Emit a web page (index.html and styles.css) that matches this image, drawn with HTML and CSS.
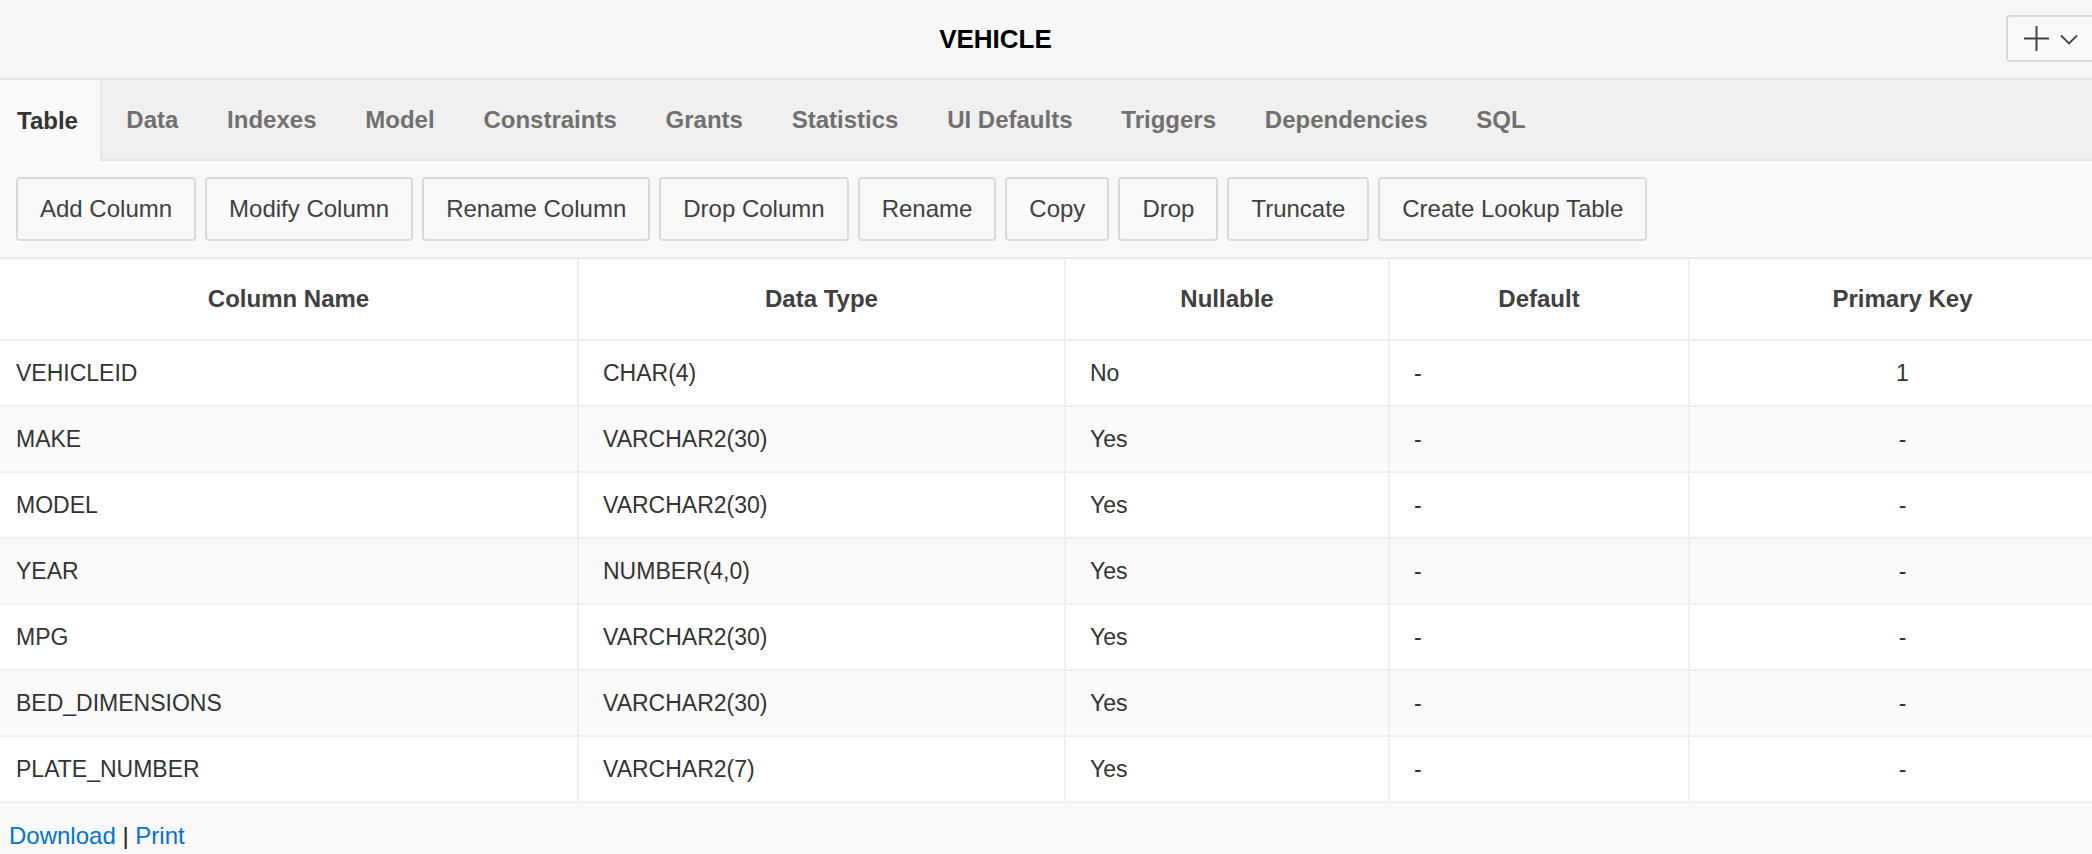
FILE: index.html
```html
<!DOCTYPE html>
<html lang="en">
<head>
<meta charset="utf-8">
<title>VEHICLE</title>
<link rel="stylesheet" href="styles.css">
</head>
<body>
<div class="page">
  <header class="titlebar">
    <h1 class="title">VEHICLE</h1>
    <button class="add-btn" type="button" aria-label="Add">
      <svg class="ico-plus" width="25" height="25" viewBox="0 0 25 25"><path d="M12.5 0V25M0 12.5H25" fill="none" stroke="#444" stroke-width="2"/></svg>
      <svg class="ico-chev" width="18" height="11" viewBox="0 0 18 11"><polyline points="1,1.5 9,9.5 17,1.5" fill="none" stroke="#444" stroke-width="1.8"/></svg>
    </button>
  </header>
  <nav class="tabs">
    <span class="tab active first">Table</span>
    <span class="tab">Data</span>
    <span class="tab">Indexes</span>
    <span class="tab">Model</span>
    <span class="tab">Constraints</span>
    <span class="tab">Grants</span>
    <span class="tab">Statistics</span>
    <span class="tab">UI Defaults</span>
    <span class="tab">Triggers</span>
    <span class="tab">Dependencies</span>
    <span class="tab">SQL</span>
  </nav>
  <div class="toolbar">
    <button class="btn" type="button">Add Column</button>
    <button class="btn" type="button">Modify Column</button>
    <button class="btn" type="button">Rename Column</button>
    <button class="btn" type="button">Drop Column</button>
    <button class="btn" type="button">Rename</button>
    <button class="btn" type="button">Copy</button>
    <button class="btn" type="button">Drop</button>
    <button class="btn" type="button">Truncate</button>
    <button class="btn" type="button">Create Lookup Table</button>
  </div>
  <table class="cols">
    <colgroup>
      <col class="c1"><col class="c2"><col class="c3"><col class="c4"><col class="c5">
    </colgroup>
    <thead>
      <tr><th>Column Name</th><th>Data Type</th><th>Nullable</th><th>Default</th><th>Primary Key</th></tr>
    </thead>
    <tbody>
      <tr><td class="name">VEHICLEID</td><td>CHAR(4)</td><td>No</td><td>-</td><td class="pk">1</td></tr>
      <tr><td class="name">MAKE</td><td>VARCHAR2(30)</td><td>Yes</td><td>-</td><td class="pk">-</td></tr>
      <tr><td class="name">MODEL</td><td>VARCHAR2(30)</td><td>Yes</td><td>-</td><td class="pk">-</td></tr>
      <tr><td class="name">YEAR</td><td>NUMBER(4,0)</td><td>Yes</td><td>-</td><td class="pk">-</td></tr>
      <tr><td class="name">MPG</td><td>VARCHAR2(30)</td><td>Yes</td><td>-</td><td class="pk">-</td></tr>
      <tr><td class="name">BED_DIMENSIONS</td><td>VARCHAR2(30)</td><td>Yes</td><td>-</td><td class="pk">-</td></tr>
      <tr><td class="name">PLATE_NUMBER</td><td>VARCHAR2(7)</td><td>Yes</td><td>-</td><td class="pk">-</td></tr>
    </tbody>
  </table>
  <div class="footer"><a class="link" href="#">Download</a> | <a class="link" href="#">Print</a></div>
</div>
</body>
</html>
```
FILE: styles.css
```css
html, body {
  margin: 0;
  padding: 0;
  overflow: hidden;
  background: #f9f9f9;
}
body {
  font-family: "Liberation Sans", Arial, Helvetica, sans-serif;
  color: #404040;
}
.page {
  width: 2116px;
}
.titlebar {
  display: flex;
  align-items: flex-start;
  height: 78px;
  background: #f7f7f7;
  border-bottom: 2px solid #e4e4e4;
}
.title {
  flex: 1;
  margin: 0;
  text-align: center;
  font-size: 26px;
  font-weight: bold;
  color: #000;
  line-height: 30px;
  padding-top: 24px;
}
.add-btn {
  margin: 15px 0 0 15px;
  width: 110px;
  height: 47px;
  box-sizing: border-box;
  border: 2px solid #dadada;
  border-radius: 4px;
  background: #f9f9f9;
  padding: 0 0 0 16px;
  display: flex;
  align-items: center;
}
.ico-plus {
  flex: none;
}
.ico-chev {
  flex: none;
  margin-left: 11px;
  margin-top: 1px;
}
.tabs {
  display: flex;
  height: 79px;
  background: #f0f0f0;
  border-bottom: 2px solid #e6e6e6;
}
.tab {
  display: flex;
  align-items: center;
  padding: 0 24.4px;
  font-size: 24px;
  font-weight: bold;
  color: #707070;
}
.tab.first {
  padding-left: 17px;
}
.tab.active {
  color: #333;
  background: #f9f9f9;
  height: 81px;
  margin-bottom: -2px;
  padding-right: 22px;
  border-right: 2px solid #e8e8e8;
}
.toolbar {
  display: flex;
  gap: 9px;
  padding: 16px 16px 16px;
  background: #f9f9f9;
  border-bottom: 2px solid #ececec;
}
.btn {
  height: 64px;
  box-sizing: border-box;
  padding: 0 22px;
  border: 2px solid #dadada;
  border-radius: 4px;
  background: #f9f9f9;
  font-family: "Liberation Sans", Arial, Helvetica, sans-serif;
  font-size: 24px;
  color: #404040;
}
.cols {
  width: 2116px;
  table-layout: fixed;
  border-collapse: collapse;
  background: #fff;
}
.c1 { width: 578px; }
.c2 { width: 487px; }
.c3 { width: 324px; }
.c4 { width: 300px; }
.c5 { width: 427px; }
.cols th {
  height: 80px;
  padding: 0;
  font-size: 24px;
  font-weight: bold;
  color: #404040;
  text-align: center;
  border: 2px solid #efefef;
  border-top: 0;
}
.cols td {
  height: 64px;
  padding: 0 0 0 24px;
  font-size: 23px;
  color: #333;
  border: 2px solid #efefef;
}
.cols th:first-child, .cols td:first-child { border-left: 0; }
.cols td.name {
  padding-left: 16px;
}
.cols td.pk {
  padding: 0;
  text-align: center;
}
.cols tbody tr:nth-child(even) td {
  background: #fafafa;
}
.footer {
  padding: 19px 9px 10px;
  font-size: 24px;
  color: #222;
  background: #f9f9f9;
}
.link {
  color: #0572ce;
  text-decoration: none;
}
```
